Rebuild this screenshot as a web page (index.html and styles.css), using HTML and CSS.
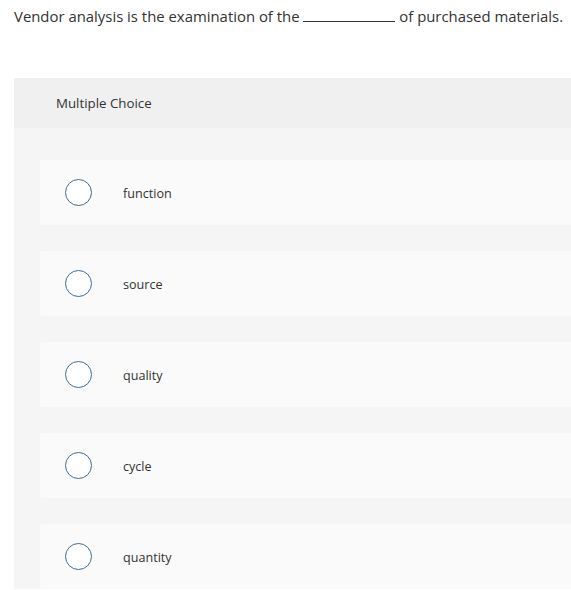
FILE: index.html
```html
<!DOCTYPE html>
<html>
<head>
<meta charset="utf-8">
<link rel="stylesheet" href="styles.css">
</head>
<body>
<p class="question">Vendor analysis is the examination of the <span class="blank"></span> of purchased materials.</p>
<section class="panel">
  <div class="panel-header">Multiple Choice</div>
  <div class="panel-body">
    <div class="option"><span class="radio"></span><span class="label">function</span></div>
    <div class="option"><span class="radio"></span><span class="label">source</span></div>
    <div class="option"><span class="radio"></span><span class="label">quality</span></div>
    <div class="option"><span class="radio"></span><span class="label">cycle</span></div>
    <div class="option"><span class="radio"></span><span class="label">quantity</span></div>
  </div>
</section>
</body>
</html>
```
FILE: styles.css
```css
html, body {
  margin: 0;
  padding: 0;
  background: #ffffff;
  font-family: "Open Sans", "Liberation Sans", sans-serif;
  color: #333333;
}
.question {
  margin: 0;
  padding: 6px 0 0 14px;
  font-size: 14.9px;
  line-height: 20px;
  white-space: nowrap;
}
.blank {
  display: inline-block;
  width: 92px;
  border-bottom: 1px solid #333333;
  vertical-align: baseline;
}
.panel {
  margin: 52px 0 0 14px;
  background: #f5f5f5;
}
.panel-header {
  height: 50px;
  background: #f0f0f0;
  display: flex;
  align-items: center;
  padding-left: 42px;
  font-size: 13.3px;
  color: #333333;
}
.panel-body {
  padding: 32px 0 0 26px;
  display: flex;
  flex-direction: column;
  gap: 26px;
}
.option {
  height: 65px;
  background: #fafafa;
  border-radius: 3px 0 0 3px;
  display: flex;
  align-items: center;
  padding-left: 25px;
  font-size: 12.6px;
}
.radio {
  width: 25px;
  height: 25px;
  border: 1.5px solid #3f6a94;
  border-radius: 50%;
  background: #ffffff;
  flex: none;
}
.label {
  margin-left: 31px;
  padding-top: 1px;
}
```
